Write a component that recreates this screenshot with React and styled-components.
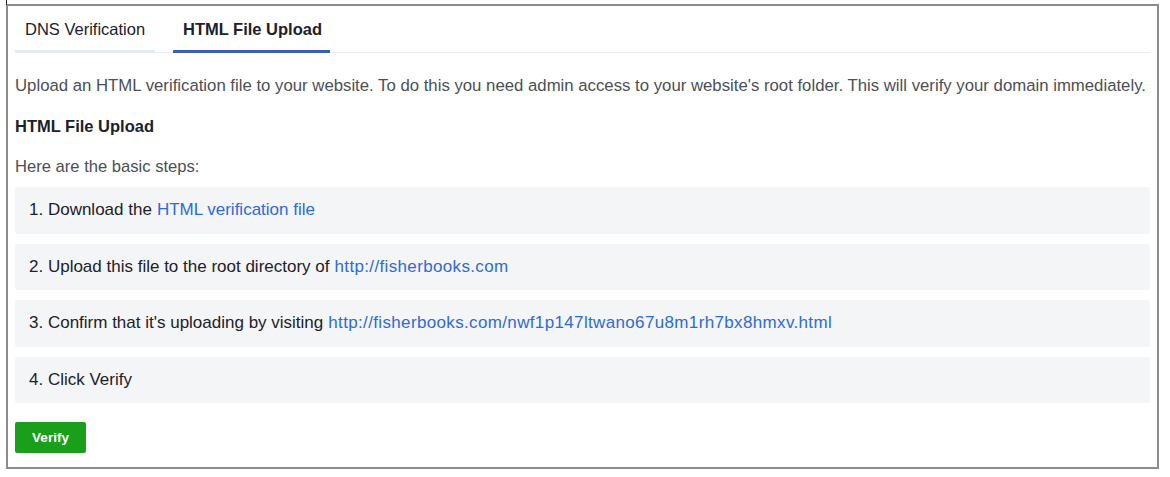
import React from "react";
import styled, { createGlobalStyle } from "styled-components";

const Global = createGlobalStyle`
  html, body { margin: 0; padding: 0; background: #ffffff; }
  body { font-family: "Liberation Sans", Arial, Helvetica, sans-serif; }
`;

const Frame = styled.div`
  position: relative;
  margin: 4px 0 0 6px;
  width: 1153px;
  height: 465px;
  box-sizing: border-box;
  border: 2px solid #8c8c8c;
  padding: 0 7px;
  background: #fff;
`;

const Tick = styled.span`
  position: absolute;
  left: -2px;
  top: -6px;
  width: 1px;
  height: 5px;
  background: #222;
`;

const TabBar = styled.div`
  display: flex;
  gap: 18px;
  padding-top: 7px;
  border-bottom: 1px solid #ececec;
`;

const Tab = styled.div`
  padding: 7px 10px 0;
  height: 40px;
  box-sizing: border-box;
  font-size: 16.5px;
  font-weight: ${p => (p.$active ? 700 : 400)};
  color: #1d2129;
  border-bottom: 3px solid ${p => (p.$active ? "#3a5db5" : "#e5eaf2")};
  margin-bottom: -1px;
  width: ${p => p.$w}px;
  white-space: nowrap;
`;

const Intro = styled.p`
  margin: 23px 0 0;
  font-size: 16.75px;
  color: #4b4f56;
  line-height: 20px;
  white-space: nowrap;
`;

const Heading = styled.h3`
  margin: 20px 0 0;
  font-size: 16.5px;
  font-weight: 700;
  color: #1d2129;
  line-height: 20px;
`;

const Sub = styled.p`
  margin: 21px 0 0;
  font-size: 16.6px;
  color: #4b4f56;
  line-height: 20px;
`;

const Steps = styled.ol`
  list-style: none;
  margin: 10px 0 0;
  padding: 0;
  display: flex;
  flex-direction: column;
  gap: 10px;
`;

const Step = styled.li`
  background: #f4f5f7;
  height: 46.5px;
  display: flex;
  align-items: center;
  padding: 0 14px;
  font-size: 17px;
  color: #1d2129;
  border-radius: 2px;
  white-space: nowrap;
`;

const Link = styled.a`
  color: #2f6ad6;
  text-decoration: none;
  margin-left: 5px;
  letter-spacing: ${p => p.$ls || "0.35px"};
`;

const VerifyButton = styled.button`
  display: block;
  margin-top: 19px;
  width: 71px;
  height: 31px;
  border: none;
  border-radius: 2px;
  background: #1a9f1a;
  color: #fff;
  font-family: "Liberation Sans", Arial, sans-serif;
  font-size: 13.5px;
  font-weight: 700;
  cursor: pointer;
`;

export default function App() {
  return (
    <>
      <Global />
      <Frame>
        <Tick />
        <TabBar>
          <Tab $w={140}>DNS Verification</Tab>
          <Tab $active $w={157}>HTML File Upload</Tab>
        </TabBar>
        <Intro>
          Upload an HTML verification file to your website. To do this you need admin access to your website's root folder. This will verify your domain immediately.
        </Intro>
        <Heading>HTML File Upload</Heading>
        <Sub>Here are the basic steps:</Sub>
        <Steps>
          <Step>1. Download the<Link href="#" $ls="0px">HTML verification file</Link></Step>
          <Step>2. Upload this file to the root directory of<Link href="#">http://fisherbooks.com</Link></Step>
          <Step>3. Confirm that it's uploading by visiting<Link href="#">http://fisherbooks.com/nwf1p147ltwano67u8m1rh7bx8hmxv.html</Link></Step>
          <Step>4. Click Verify</Step>
        </Steps>
        <VerifyButton>Verify</VerifyButton>
      </Frame>
    </>
  );
}
